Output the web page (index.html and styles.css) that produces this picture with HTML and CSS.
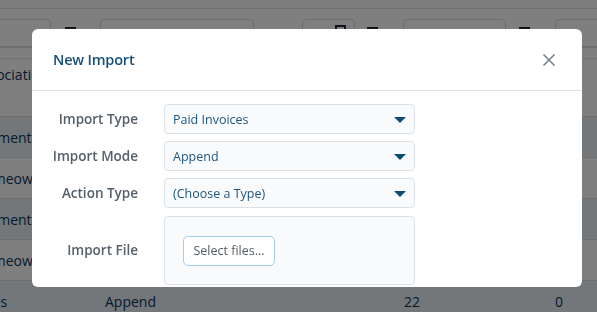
FILE: index.html
```html
<!DOCTYPE html>
<html>
<head>
<meta charset="utf-8">
<link rel="stylesheet" href="styles.css">
</head>
<body>
<div class="page">
  <div class="topbar"></div>
  <div class="filters">
    <div class="finput w1"></div>
    <span class="ficon i1"></span>
    <div class="finput w2"></div>
    <div class="finput w3"><span class="cal"></span></div>
    <span class="ficon i2"></span>
    <div class="finput w4"></div>
    <span class="ficon i3"></span>
    <div class="finput w5"></div>
  </div>
  <table class="grid">
    <tr class="head"><td class="c1">Associations</td><td class="c2"></td><td class="c3"></td><td class="c4"></td><td class="c5"></td></tr>
    <tr class="alt"><td class="c1">Payments</td><td class="c2">Append</td><td class="c3">12</td><td class="c4">0</td><td class="c5"></td></tr>
    <tr><td class="c1">Homeowners</td><td class="c2">Append</td><td class="c3">8</td><td class="c4">0</td><td class="c5"></td></tr>
    <tr class="alt"><td class="c1">Payments</td><td class="c2">Append</td><td class="c3">5</td><td class="c4">0</td><td class="c5"></td></tr>
    <tr><td class="c1">Homeowners</td><td class="c2">Append</td><td class="c3">14</td><td class="c4">0</td><td class="c5"></td></tr>
    <tr class="alt"><td class="c1">Dues</td><td class="c2">Append</td><td class="c3">22</td><td class="c4">0</td><td class="c5"></td></tr>
  </table>
</div>
<div class="overlay"></div>
<div class="modal">
  <div class="modal-head">
    <h2 class="title">New Import</h2>
    <button class="close" aria-label="Close">
      <svg width="14" height="14" viewBox="0 0 14 14"><path d="M1.5 1.5 L12.5 12.5 M12.5 1.5 L1.5 12.5" stroke="#6f7e8c" stroke-width="1.5" fill="none"/></svg>
    </button>
  </div>
  <div class="modal-body">
    <label class="lbl">Import Type</label>
    <div class="select"><span>Paid Invoices</span><i class="caret"></i></div>
    <label class="lbl">Import Mode</label>
    <div class="select"><span>Append</span><i class="caret"></i></div>
    <label class="lbl">Action Type</label>
    <div class="select"><span>(Choose a Type)</span><i class="caret"></i></div>
    <label class="lbl">Import File</label>
    <div class="filebox"><button class="pick">Select files...</button></div>
  </div>
</div>
</body>
</html>
```
FILE: styles.css
```css
html, body {
  margin: 0;
  padding: 0;
  background: #ffffff;
  font-family: "Open Sans", "Noto Sans", sans-serif;
  overflow: hidden;
}
.page {
  width: 623px;
  margin-left: -26px;
  overflow: hidden;
}
.topbar {
  height: 8px;
  border-bottom: 1px solid #dcdcdc;
  background: #fbfbfb;
}
.filters {
  display: flex;
  align-items: flex-start;
  height: 39px;
  padding-top: 10px;
  border-bottom: 1px solid #e2e2e2;
  box-sizing: border-box;
  overflow: hidden;
}
.filters > * { flex-shrink: 0; }
.finput {
  height: 28px;
  border: 1px solid #d9d9d9;
  border-radius: 4px;
  box-sizing: border-box;
  background: #fff;
  position: relative;
}
.w1 { width: 77px; }
.w2 { width: 154px; }
.w3 { width: 53px; margin-left: 48px; }
.w4 { width: 103px; }
.filters .w5 { flex: 1 1 auto; min-width: 0; border-right: 0; border-radius: 4px 0 0 4px; }
.ficon {
  width: 11px;
  height: 14px;
  margin-top: 8px;
  background: #1f2a35;
}
.i1 { margin-left: 14px; margin-right: 24px; }
.i2 { margin-left: 12px; margin-right: 25px; }
.i3 { margin-left: 13px; margin-right: 25px; }
.cal {
  position: absolute;
  left: 32px;
  top: 5px;
  width: 11px;
  height: 12px;
  border: 2px solid #1f2a35;
  box-sizing: border-box;
}
.grid {
  border-collapse: collapse;
  table-layout: fixed;
  width: 623px;
  font-size: 14px;
  color: #0b3656;
  border-top: 1px solid #e2e2e2;
  margin-top: 10px;
}
.grid td {
  border-bottom: 1px solid #dcdcdc;
  padding: 0;
  height: 40px;
  vertical-align: middle;
  white-space: nowrap;
  overflow: hidden;
}
.grid tr.head td {
  height: 58px;
  vertical-align: top;
  padding-top: 6px;
  box-sizing: border-box;
}
.grid tr.alt td { background: #e6eef5; }
.c1 { width: 131px; }
.c2 { width: 250px; }
.c3 { width: 65px; text-align: right; }
.c4 { width: 143px; text-align: right; }
.c5 { width: auto; }
.overlay {
  position: fixed;
  inset: 0;
  background: rgba(0, 0, 0, 0.5);
}
.modal {
  position: fixed;
  left: 32px;
  top: 29px;
  width: 550px;
  height: 258px;
  background: #ffffff;
  border-radius: 6px;
  overflow: hidden;
}
.modal-head {
  height: 62px;
  border-bottom: 1px solid #e3e3e3;
  box-sizing: border-box;
  display: flex;
  align-items: center;
  justify-content: space-between;
  padding: 0 26px 0 21px;
}
.title {
  margin: 0;
  font-size: 14.5px;
  font-weight: 600;
  color: #16507a;
  letter-spacing: -0.2px;
}
.close {
  border: 0;
  background: none;
  padding: 0;
  width: 14px;
  height: 14px;
  display: flex;
}
.modal-body {
  display: grid;
  grid-template-columns: 106px 251px;
  column-gap: 26px;
  row-gap: 7px;
  padding-top: 13px;
  align-items: center;
}
.lbl {
  text-align: right;
  font-size: 13.5px;
  font-weight: 600;
  color: #56606b;
}
.select {
  height: 30px;
  box-sizing: border-box;
  border: 1px solid #dde1e6;
  border-radius: 4px;
  background: #f8fafc;
  display: flex;
  align-items: center;
  justify-content: space-between;
  padding: 0 8px;
  font-size: 12.5px;
  color: #1d5580;
}
.caret {
  width: 0;
  height: 0;
  border-left: 6px solid transparent;
  border-right: 6px solid transparent;
  border-top: 6px solid #0d4a74;
  margin-top: 2px;
}
.filebox {
  height: 69px;
  box-sizing: border-box;
  border: 1px solid #dde1e6;
  border-radius: 4px;
  background: #f8fafc;
  display: flex;
  align-items: center;
  padding-left: 18px;
  margin-top: 1px;
}
.pick {
  height: 30px;
  width: 92px;
  border: 1px solid #9dcfee;
  border-radius: 5px;
  background: #ffffff;
  font-family: "Open Sans", "Noto Sans", sans-serif;
  font-size: 12.5px;
  color: #555b62;
  padding: 0;
}
```
